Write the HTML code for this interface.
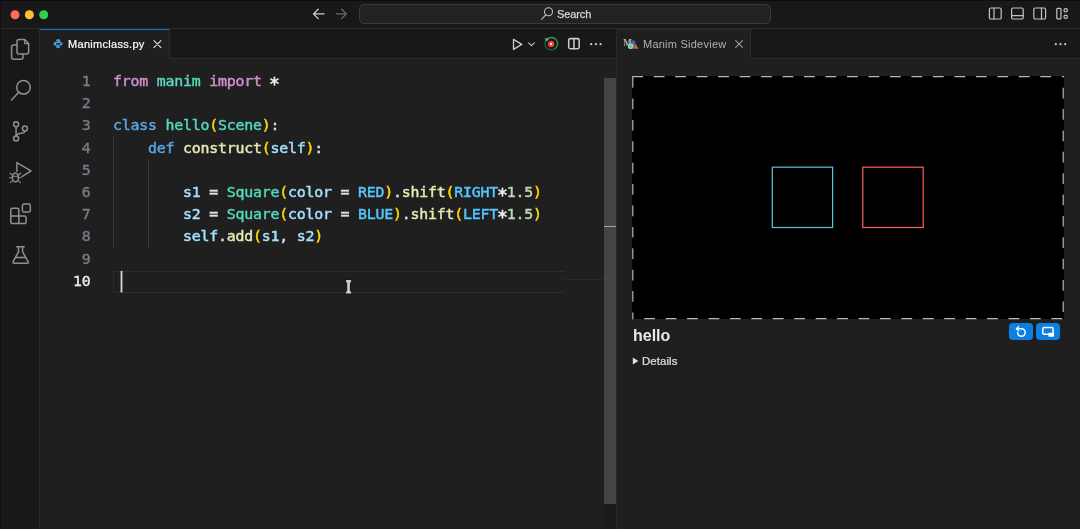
<!DOCTYPE html>
<html lang="en">
<head>
<meta charset="utf-8">
<title>Manimclass.py — Manim Sideview</title>
<style>
*{box-sizing:border-box;margin:0;padding:0}
html,body{width:1080px;height:529px;overflow:hidden;background:#1f1f1f}
body{position:relative;font-family:"Liberation Sans",sans-serif;color:#cccccc;-webkit-font-smoothing:antialiased}
.abs{position:absolute}
#titlebar{left:0;top:0;width:1080px;height:29px;background:#181818;border-bottom:1px solid #2b2b2b}
#topedge{left:0;top:0;width:1080px;height:1px;background:#0c0c0c}
#leftedge{left:0;top:0;width:1px;height:529px;background:#101010}
.tl{position:absolute;top:10.100px;width:9px;height:9px;border-radius:50%}
#search{left:359px;top:4px;width:412px;height:20px;border:1px solid #3a3a3a;border-radius:5px;background:#222222}
#searchtxt{left:557.2px;top:7px;font-size:11px;line-height:14px;color:#d6d6d6;letter-spacing:-.12px;-webkit-text-stroke:.25px;will-change:transform}
#activity{left:0;top:29px;width:40px;height:500px;background:#181818;border-right:1px solid #2b2b2b}
#tabbar1{left:40px;top:29px;width:576px;height:30px;background:#181818;border-bottom:1px solid #2b2b2b}
#tab1{left:40px;top:29px;width:130px;height:30px;background:#1f1f1f;border-top:1px solid #0078d4;border-right:1px solid #2b2b2b}
#tab1txt{left:68.200px;top:37.2px;font-size:11px;line-height:14px;color:#ffffff;letter-spacing:.3px;-webkit-text-stroke:.2px;will-change:transform}
#editor{left:40px;top:59px;width:576px;height:470px;background:#1f1f1f}
#sash{left:616px;top:29px;width:1px;height:500px;background:#2b2b2b}
#tabbar2{left:617px;top:29px;width:463px;height:30px;background:#181818;border-bottom:1px solid #2b2b2b}
#tab2{left:617px;top:29px;width:134px;height:30px;background:#1f1f1f;border-right:1px solid #2b2b2b;border-top:1px solid #2b2b2b}
#tab2txt{left:643px;top:37.2px;font-size:11px;line-height:14px;color:#b0b0b0;letter-spacing:.24px;will-change:transform}
#side{left:617px;top:59px;width:463px;height:470px;background:#1f1f1f}
.ln{position:absolute;left:41px;width:49.5px;text-align:right;font-family:"DejaVu Sans Mono","Liberation Mono",monospace;font-size:14.9px;line-height:22.2px;height:22.2px;color:#747c89;white-space:pre;letter-spacing:-.22px;-webkit-text-stroke:.4px;will-change:transform}
.cl{position:absolute;left:112.5px;font-family:"DejaVu Sans Mono","Liberation Mono",monospace;font-size:14.9px;line-height:22.2px;height:22.2px;color:#e0e0e0;white-space:pre;letter-spacing:-.22px;-webkit-text-stroke:.45px;will-change:transform}
.k{color:#d28fcd}.b{color:#5ba5e4}.t{color:#55d9bd}.f{color:#e8e8b4}.v{color:#a3e0ff}.c{color:#55c7ff}.n{color:#bfd8b1}.y{color:#ffdb00}.st{display:inline-block;transform:translate(-.150px,3.200px) scale(1.220);color:#efefef}
#curline{left:112.500px;top:270.600px;width:452px;height:22px;border:1px solid #2d2d2d;border-right:0}
#cursor{display:none}
.guide{position:absolute;width:1px;background:#383838}
#slider{left:604px;top:78px;width:12px;height:426px;background:#454545}
#track{left:604px;top:504px;width:12px;height:25px;background:#1b1b1b}
#ovmark{left:604px;top:226px;width:12px;height:1px;background:#a4a4a4}
#mmline{left:564px;top:279px;width:40px;height:1px;background:#292929}
#preview{left:632px;top:75.700px;width:432px;height:243.500px;background:#000}
#hello{left:632.700px;top:326.300px;font-size:16px;line-height:20px;font-weight:700;color:#e8e8e8;will-change:transform}
#details{left:641.500px;top:353.800px;font-size:11.400px;line-height:14px;color:#e0e0e0;letter-spacing:.1px;-webkit-text-stroke:.2px;will-change:transform}
.btn{position:absolute;top:323px;width:24px;height:17px;border-radius:4px;background:#0c80e2}
</style>
</head>
<body>
<div id="titlebar" class="abs"></div>
<div id="search" class="abs"></div>
<div id="searchtxt" class="abs">Search</div>

<div id="activity" class="abs"></div>
<div id="tabbar1" class="abs"></div>
<div id="tab1" class="abs"></div>
<div id="tab1txt" class="abs">Manimclass.py</div>
<div id="editor" class="abs"></div>

<div class="ln" style="top:70px">1</div>
<div class="ln" style="top:92.2px">2</div>
<div class="ln" style="top:114.4px">3</div>
<div class="ln" style="top:136.6px">4</div>
<div class="ln" style="top:158.8px">5</div>
<div class="ln" style="top:181px">6</div>
<div class="ln" style="top:203.2px">7</div>
<div class="ln" style="top:225.4px">8</div>
<div class="ln" style="top:247.6px">9</div>
<div class="ln" style="top:269.8px;color:#ececec">10</div>

<div class="guide" style="left:113px;top:136.6px;height:111px"></div>
<div class="guide" style="left:148px;top:158.8px;height:88.8px"></div>

<div class="cl" style="top:70px"><span class="k">from</span> <span class="t">manim</span> <span class="k">import</span> <span class="st">*</span></div>
<div class="cl" style="top:114.4px"><span class="b">class</span> <span class="t">hello</span><span class="y">(</span><span class="t">Scene</span><span class="y">)</span>:</div>
<div class="cl" style="top:136.6px">    <span class="b">def</span> <span class="f">construct</span><span class="y">(</span><span class="v">self</span><span class="y">)</span>:</div>
<div class="cl" style="top:181px">        <span class="v">s1</span> = <span class="t">Square</span><span class="y">(</span><span class="v">color</span> = <span class="c">RED</span><span class="y">)</span>.<span class="f">shift</span><span class="y">(</span><span class="c">RIGHT</span><span class="st">*</span><span class="n">1.5</span><span class="y">)</span></div>
<div class="cl" style="top:203.2px">        <span class="v">s2</span> = <span class="t">Square</span><span class="y">(</span><span class="v">color</span> = <span class="c">BLUE</span><span class="y">)</span>.<span class="f">shift</span><span class="y">(</span><span class="c">LEFT</span><span class="st">*</span><span class="n">1.5</span><span class="y">)</span></div>
<div class="cl" style="top:225.4px">        <span class="v">self</span>.<span class="f">add</span><span class="y">(</span><span class="v">s1</span>, <span class="v">s2</span><span class="y">)</span></div>

<div id="curline" class="abs"></div>
<div id="cursor" class="abs"></div>
<div id="slider" class="abs"></div>
<div id="track" class="abs"></div>
<div id="ovmark" class="abs"></div>
<div id="mmline" class="abs"></div>

<div id="sash" class="abs"></div>
<div id="tabbar2" class="abs"></div>
<div id="tab2" class="abs"></div>
<div id="tab2txt" class="abs">Manim Sideview</div>
<div id="side" class="abs"></div>
<div id="preview" class="abs"></div>
<div id="hello" class="abs">hello</div>
<div id="details" class="abs">Details</div>
<div class="btn" style="left:1009px"></div>
<div class="btn" style="left:1036px"></div>


<svg id="icons" class="abs" style="left:0;top:0" width="1080" height="529" viewBox="0 0 1080 529" fill="none" stroke-linecap="round" stroke-linejoin="round">
<!-- activity bar -->
<g stroke="#8f8f8f" stroke-width="1.5">
  <!-- files -->
  <path d="M24.6 39.6H19a2 2 0 0 0-2 2V52a2 2 0 0 0 2 2h7.6a2 2 0 0 0 2-2V43.6Z"/>
  <path d="M24.6 39.6V43.6H28.6" stroke-width="1.1"/>
  <path d="M17 45H13.6a2 2 0 0 0-2 2V57.2a2 2 0 0 0 2 2H21a2 2 0 0 0 2-2V54"/>
  <!-- search -->
  <circle cx="23.5" cy="87.3" r="6.8"/>
  <path d="M18.7 92.2L11.6 100"/>
  <!-- source control -->
  <circle cx="16.1" cy="124.2" r="2.5"/>
  <circle cx="24.9" cy="128.4" r="2.5"/>
  <circle cx="16.1" cy="138.4" r="2.5"/>
  <path d="M16.1 126.7V135.9"/>
  <path d="M24.9 130.9C24.9 133.4 21.2 133.2 19.6 133.5S16.5 134.4 16.3 135.9"/>
  <!-- run and debug -->
  <path d="M16.9 171.2V162.6L31 170.9L22 176.6"/>
  <ellipse cx="15.4" cy="177.4" rx="3" ry="4.4"/>
  <path d="M12.6 176.3H18.2" stroke-width="1.1"/>
  <path d="M12.6 175.2L10 173.2M12.4 177.8H9.6M12.8 180.4L10.2 182.6M18.2 175.2L20.8 173.2M18.4 177.8H21.2M18 180.4L20.6 182.6" stroke-width="1.1"/>
  <!-- extensions -->
  <path d="M12.3 208.3H17.3a1.5 1.5 0 0 1 1.5 1.5V216H24.6a1.5 1.5 0 0 1 1.5 1.5V222.1a1.5 1.5 0 0 1-1.5 1.5H12.3a1.5 1.5 0 0 1-1.5-1.5V209.8a1.5 1.5 0 0 1 1.5-1.5Z"/>
  <path d="M10.8 216H18.8V223.6"/>
  <rect x="22.4" y="204.1" width="7.9" height="7.9" rx="1.6"/>
  <!-- flask -->
  <path d="M16.6 246.7H24.2"/>
  <path d="M18.5 246.9V251.8L13.1 261.6a1 1 0 0 0 .9 1.6H27.2a1 1 0 0 0 .9-1.6L22.6 251.8V246.9"/>
  <path d="M15.8 257.6H25.3"/>
</g>
<!-- traffic lights -->
<g stroke="none">
  <circle cx="15" cy="14.700" r="4.500" fill="#ff6a62"/>
  <circle cx="29.350" cy="14.700" r="4.500" fill="#ffc02f"/>
  <circle cx="43.700" cy="14.700" r="4.500" fill="#2dd04a"/>
</g>
<!-- title bar nav arrows -->
<g stroke="#d0d0d0" stroke-width="1.3">
  <path d="M324 13.9H313.6M318.2 9.2L313.5 13.9L318.2 18.6"/>
</g>
<g stroke="#6c6c6c" stroke-width="1.3">
  <path d="M336.2 13.9H346M341.6 9.2L346.3 13.9L341.6 18.6"/>
</g>
<!-- title search icon -->
<g stroke="#c0c0c0" stroke-width="1.1">
  <circle cx="548.5" cy="11.7" r="4"/>
  <path d="M545.7 14.8L541.6 19.3"/>
</g>
<!-- layout icons -->
<g stroke="#c4c4c4" stroke-width="1.2">
  <rect x="989.4" y="8" width="11.8" height="11" rx="1.6"/>
  <path d="M994 8V19"/>
  <rect x="1011.6" y="8" width="11.6" height="11" rx="1.6"/>
  <path d="M1011.6 15.6H1023.2"/>
  <rect x="1033.8" y="8" width="11.8" height="11" rx="1.6"/>
  <path d="M1041.5 8V19"/>
  <rect x="1056.8" y="8.3" width="4.2" height="10.6" rx="1"/>
  <circle cx="1065.7" cy="10.3" r="1.7"/>
  <circle cx="1065.7" cy="16.8" r="1.7"/>
</g>

<!-- python file icon -->
<g stroke="none" transform="translate(58.150 43.700) scale(.640) translate(-8 -8)">
  <path id="pysnake" d="M8 1C5.500 1 4.900 2 4.900 3.100V4.600H8.200V5.300H3.500C2 5.300 1 6.400 1 8C1 9.700 2 10.800 3.200 10.800H4.500V9C4.500 7.700 5.500 6.800 6.800 6.800H9.500C10.500 6.800 11.200 6.100 11.200 5.200V3.100C11.200 1.800 10 1 8 1Z" fill="#4fabe6"/>
  <path d="M8 1C5.500 1 4.900 2 4.900 3.100V4.600H8.200V5.300H3.500C2 5.300 1 6.400 1 8C1 9.700 2 10.800 3.200 10.800H4.500V9C4.500 7.700 5.500 6.800 6.800 6.800H9.500C10.500 6.800 11.200 6.100 11.200 5.200V3.100C11.200 1.800 10 1 8 1Z" fill="#4099d4" transform="rotate(180 8 8)"/>
  <circle cx="6.300" cy="2.900" r=".700" fill="#1f3f55"/>
  <circle cx="9.700" cy="13.100" r=".700" fill="#1f3f55"/>
</g>
<!-- tab close -->
<path d="M153.900 40.600l7 7M160.900 40.600l-7 7" stroke="#e6e6e6" stroke-width="1.100"/>
<path d="M735.700 40.600l6.800 6.800M742.500 40.600l-6.800 6.800" stroke="#9d9d9d" stroke-width="1.100"/>
<!-- editor actions -->
<g stroke="#cacaca" stroke-width="1.350">
  <path d="M513.500 39.400V49.400L521.700 44.400Z"/>
  <path d="M528.600 42.800L531.500 45.700L534.400 42.800" stroke-width="1.100"/>
  <rect x="568.700" y="38.600" width="10.500" height="10.100" rx="1.700" stroke-width="1.550"/>
  <path d="M573.950 38.600V48.700" stroke-width="1.550"/>
</g>
<g fill="#c8c8c8" stroke="none">
  <circle cx="591.200" cy="44.200" r="1.150"/><circle cx="595.900" cy="44.200" r="1.150"/><circle cx="600.600" cy="44.200" r="1.150"/>
  <circle cx="1055.800" cy="44.200" r="1.100"/><circle cx="1060.500" cy="44.200" r="1.100"/><circle cx="1065.200" cy="44.200" r="1.100"/>
</g>
<!-- record/re-run icon -->
<path d="M546.900 39.600A6.100 6.100 0 1 1 554.700 48.800" stroke="#2c9a55" stroke-width="1.400" stroke-linecap="butt"/>
<path d="M554.700 48.800A6.100 6.100 0 0 1 545.400 41.800" stroke="#2a8a4c" stroke-width="1.400" stroke-dasharray="1.300 1.100" stroke-linecap="butt"/>
<path d="M545.400 38.100L548.700 39.400L546 41.500Z" fill="#4cc673" stroke="#4cc673" stroke-width=".400"/>
<circle cx="551.150" cy="43.900" r="3.250" fill="#f5333a" stroke="none"/>
<circle cx="551.150" cy="43.900" r="1.250" fill="#ffe9e9" stroke="none"/>
<!-- manim icon -->
<g stroke="none">
  <path d="M631.400 40.400h3.200l1.700 5.900h-4.900z" fill="#4b5fd1"/>
  <circle cx="630.700" cy="46.300" r="2.750" fill="#86dca4"/>
  <circle cx="630.700" cy="46.300" r=".900" fill="#4aa56e"/>
  <path d="M635.800 43.900L638.400 48.700H633.300Z" fill="#e2623c"/>
</g>
<text x="623.200" y="45.800" font-family="Liberation Serif,serif" font-size="10.500" font-weight="700" fill="#bcbab2" stroke="none" textLength="8.600" lengthAdjust="spacingAndGlyphs">M</text>
<g stroke="none">
  <circle cx="630.700" cy="46.300" r="2.750" fill="#86dca4"/>
  <circle cx="630.700" cy="46.300" r=".900" fill="#4aa56e"/>
</g>
<!-- preview squares -->
<rect x="772.300" y="167.200" width="60.300" height="60.300" stroke="#58c4dd" stroke-width="1.200" stroke-linejoin="miter"/>
<rect x="862.800" y="167.200" width="60.400" height="60.300" stroke="#fc6255" stroke-width="1.200" stroke-linejoin="miter"/>
<!-- dashed frame -->
<g stroke="#b6b6b6" stroke-width="1.200" stroke-linecap="butt">
  <path d="M632.200 76.600H1064" stroke-dasharray="10.800 10.680"/>
  <path d="M633.400 318.700H1064" stroke-dasharray="10.800 10.630" stroke-dashoffset="-10.800"/>
  <path d="M632.800 77.100V319.200" stroke-dasharray="10.700 10.700"/>
  <path d="M1063.200 87.700V319" stroke-dasharray="10.700 10.670"/>
</g>
<!-- button icons -->
<g stroke="#ffffff" stroke-width="1.500">
  <path d="M1016.600 328.700H1021.400A3.800 3.800 0 1 1 1017.600 332.500"/>
  <path d="M1018.600 326.700L1016.400 328.800L1018.600 330.900" stroke-width="1.300"/>
  <rect x="1042.800" y="327.400" width="10.300" height="6.800" rx="1.500"/>
</g>
<rect x="1048.300" y="332.800" width="5.800" height="3.900" rx=".8" fill="#ffffff" stroke="none"/>
<!-- details marker -->
<path d="M632.800 357.600V364.400L638.300 361Z" fill="#e0e0e0" stroke="none"/>
<!-- text cursor -->
<rect x="120.600" y="270.900" width="1.800" height="21.500" fill="#d8d8d8" stroke="none"/>
<!-- mouse I-beam -->
<g stroke="#141414" stroke-width="3.800" stroke-linecap="round">
  <path d="M347.100 281.200h2.900M347.100 292.400h2.900M348.550 281.500v10.500"/>
</g>
<g stroke="#cdcdcd" stroke-linecap="round">
  <path d="M347 281.200h3.100M347 292.400h3.100" stroke-width="2.400"/>
  <path d="M348.550 281.200v11.200" stroke-width="2.700" stroke-linecap="butt"/>
</g>
</svg>
<div id="topedge" class="abs"></div>
<div id="leftedge" class="abs"></div>
</body>
</html>
